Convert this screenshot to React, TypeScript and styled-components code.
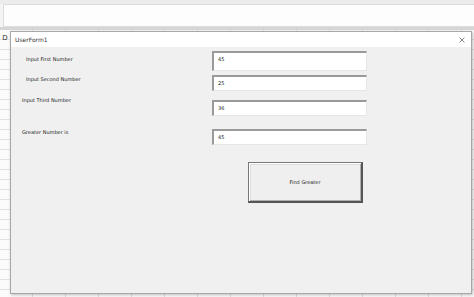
import { createGlobalStyle, styled } from "styled-components";

const GlobalStyle = createGlobalStyle`
  html, body {
    margin: 0;
    padding: 0;
    width: 474px;
    height: 297px;
    overflow: hidden;
    background: #f4f4f4;
    font-family: "DejaVu Sans", "Liberation Sans", sans-serif;
  }
`;

const Screen = styled.div`
  position: relative;
  width: 474px;
  height: 297px;
  display: flex;
  flex-direction: column;
  background: #f4f4f4;
`;

const TopStrip = styled.div`
  height: 4px;
  background: #ececec;
`;

const FormulaBar = styled.div`
  height: 21px;
  margin-left: 3px;
  background: #fdfdfd;
  border: 1px solid #dcdcdc;
  border-right: none;
`;

const Divider = styled.div`
  height: 3px;
  background: #d6d6d6;
`;

const Sheet = styled.div`
  flex: 1;
  display: flex;
  background:
    repeating-linear-gradient(90deg, transparent 0 32px, #dedede 32px 33px),
    repeating-linear-gradient(180deg, transparent 0 9px, #e2e2e2 9px 10px),
    #fbfbfb;
`;

const ColHeader = styled.div`
  width: 10px;
  padding-top: 4px;
  text-align: center;
  font-size: 7px;
  line-height: 8px;
  color: #333;
`;

const Dialog = styled.div`
  position: absolute;
  left: 10px;
  top: 31px;
  width: 460px;
  height: 261px;
  display: flex;
  flex-direction: column;
  border: 1px solid #a8a8a8;
  box-shadow: 1px 1px 3px rgba(0, 0, 0, 0.25);
  background: #f0f0f0;
`;

const TitleBar = styled.div`
  height: 15px;
  flex: none;
  display: flex;
  align-items: center;
  justify-content: space-between;
  padding: 0 6px 0 4px;
  background: #ffffff;
  font-size: 6px;
  color: #333;
`;

const CloseIcon = styled.svg`
  width: 6px;
  height: 6px;
`;

const Body = styled.div`
  flex: 1;
  display: flex;
  flex-direction: column;
  padding-top: 4px;
`;

const Row = styled.div<{ $gap: number }>`
  display: grid;
  grid-template-columns: 201px 155px;
  margin-top: ${(p) => p.$gap}px;
`;

const Label = styled.div<{ $indent: number; $offset: number }>`
  padding-left: ${(p) => p.$indent}px;
  margin-top: ${(p) => p.$offset}px;
  font-size: 5px;
  line-height: 8px;
  color: #1a1a1a;
  white-space: nowrap;
`;

const TextBox = styled.div<{ $h: number }>`
  height: ${(p) => p.$h}px;
  box-sizing: border-box;
  padding: 2px 4px;
  background: #ffffff;
  border-top: 2px solid #9a9a9a;
  border-left: 2px solid #9a9a9a;
  border-right: 1px solid #e6e6e6;
  border-bottom: 1px solid #e6e6e6;
  font-size: 5px;
  line-height: 8px;
  color: #222;
`;

const ButtonRow = styled.div`
  margin-top: 17px;
  padding-left: 237px;
`;

const Button = styled.div`
  width: 115px;
  height: 41px;
  box-sizing: border-box;
  display: flex;
  align-items: center;
  justify-content: center;
  background: #efefef;
  border: 1px solid #777777;
  border-right: 2px solid #555555;
  border-bottom: 2px solid #555555;
  box-shadow: inset 1px 1px 0 #ffffff, inset -1px -1px 0 #b0b0b0,
    inset 2px 2px 0 #dcdcdc;
  font-size: 5px;
  color: #1a1a1a;
`;

const fields = [
  { label: "Input First Number", value: "45", gap: 0, indent: 15, offset: 4, h: 20 },
  { label: "Input Second Number", value: "25", gap: 4, indent: 15, offset: 0, h: 16 },
  { label: "Input Third Number", value: "36", gap: 9, indent: 11, offset: -4, h: 16 },
  { label: "Greater Number is", value: "45", gap: 13, indent: 11, offset: -1, h: 16 },
];

export default function App() {
  return (
    <>
      <GlobalStyle />
      <Screen>
        <TopStrip />
        <FormulaBar />
        <Divider />
        <Sheet>
          <ColHeader>D</ColHeader>
        </Sheet>
        <Dialog>
          <TitleBar>
            <span>UserForm1</span>
            <CloseIcon viewBox="0 0 10 10">
              <path d="M1 1 L9 9 M9 1 L1 9" stroke="#444" strokeWidth="1.1" />
            </CloseIcon>
          </TitleBar>
          <Body>
            {fields.map((f) => (
              <Row key={f.label} $gap={f.gap}>
                <Label $indent={f.indent} $offset={f.offset}>
                  {f.label}
                </Label>
                <TextBox $h={f.h}>{f.value}</TextBox>
              </Row>
            ))}
            <ButtonRow>
              <Button>Find Greater</Button>
            </ButtonRow>
          </Body>
        </Dialog>
      </Screen>
    </>
  );
}
